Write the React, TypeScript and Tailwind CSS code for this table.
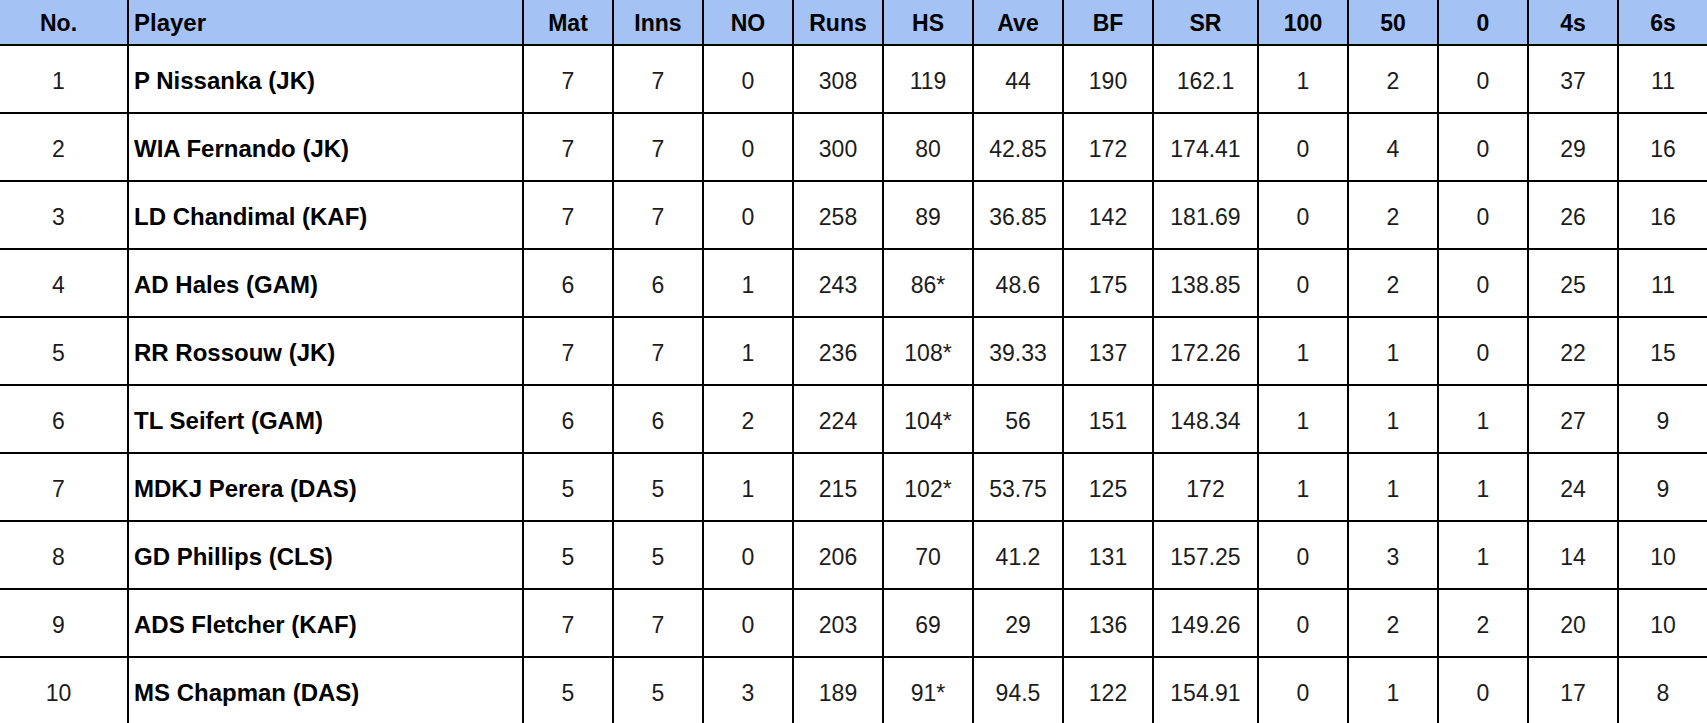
import React from 'react';

const headers = ['No.', 'Player', 'Mat', 'Inns', 'NO', 'Runs', 'HS', 'Ave', 'BF', 'SR', '100', '50', '0', '4s', '6s'];

const rows: (string | number)[][] = [
  [1, 'P Nissanka (JK)', 7, 7, 0, 308, '119', '44', 190, '162.1', 1, 2, 0, 37, 11],
  [2, 'WIA Fernando (JK)', 7, 7, 0, 300, '80', '42.85', 172, '174.41', 0, 4, 0, 29, 16],
  [3, 'LD Chandimal (KAF)', 7, 7, 0, 258, '89', '36.85', 142, '181.69', 0, 2, 0, 26, 16],
  [4, 'AD Hales (GAM)', 6, 6, 1, 243, '86*', '48.6', 175, '138.85', 0, 2, 0, 25, 11],
  [5, 'RR Rossouw (JK)', 7, 7, 1, 236, '108*', '39.33', 137, '172.26', 1, 1, 0, 22, 15],
  [6, 'TL Seifert (GAM)', 6, 6, 2, 224, '104*', '56', 151, '148.34', 1, 1, 1, 27, 9],
  [7, 'MDKJ Perera (DAS)', 5, 5, 1, 215, '102*', '53.75', 125, '172', 1, 1, 1, 24, 9],
  [8, 'GD Phillips (CLS)', 5, 5, 0, 206, '70', '41.2', 131, '157.25', 0, 3, 1, 14, 10],
  [9, 'ADS Fletcher (KAF)', 7, 7, 0, 203, '69', '29', 136, '149.26', 0, 2, 2, 20, 10],
  [10, 'MS Chapman (DAS)', 5, 5, 3, 189, '91*', '94.5', 122, '154.91', 0, 1, 0, 17, 8],
];

const grid =
  'grid grid-cols-[129px_395px_90px_90px_90px_90px_90px_90px_90px_105px_90px_90px_90px_90px_90px]';

function align(i: number) {
  if (i === 0) return 'justify-center pr-[10px]';
  if (i === 1) return 'justify-start pl-[5px]';
  return 'justify-center';
}

export default function App() {
  return (
    <div
      className="w-[1707px] h-[723px] overflow-hidden bg-white"
      style={{ fontFamily: '"Liberation Sans", Arial, sans-serif' }}
    >
      {/* Header */}
      <div className={`${grid} h-[46px] bg-[#a4c2f4]`}>
        {headers.map((h, i) => (
          <div
            key={h}
            className={`flex items-center pt-[2px] border-r-2 border-b-2 border-black font-bold text-black ${align(i)} ${
              i === 1 ? 'text-[24px]' : 'text-[23px]'
            }`}
          >
            {h}
          </div>
        ))}
      </div>

      {/* Body */}
      {rows.map((r) => (
        <div key={r[0]} className={`${grid} h-[68px]`}>
          {r.map((v, i) => (
            <div
              key={i}
              className={`flex items-center pt-[4px] border-r-2 border-b-2 border-black ${align(i)} ${
                i === 1 ? 'text-[24px] font-bold text-black' : 'text-[23px] text-[#1c1c1c]'
              }`}
            >
              {v}
            </div>
          ))}
        </div>
      ))}
    </div>
  );
}
